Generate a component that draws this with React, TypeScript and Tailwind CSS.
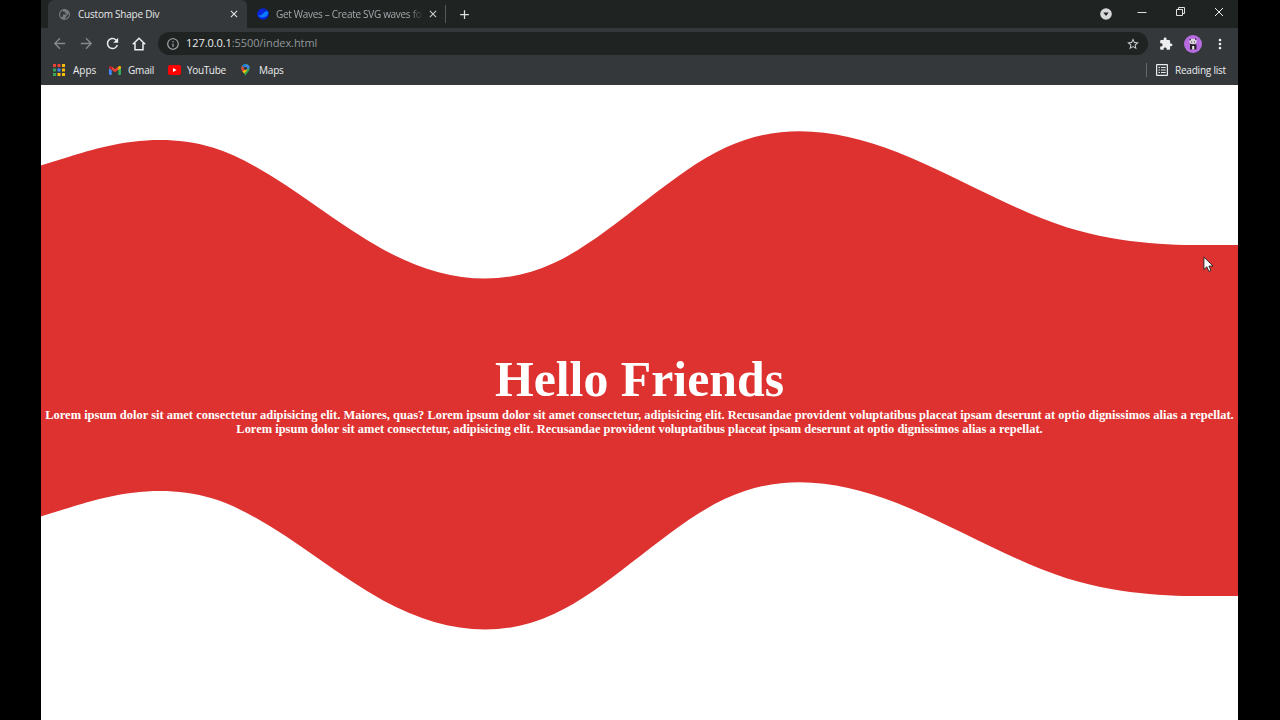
import React from 'react'
import { MdStarOutline, MdExtension, MdMoreVert, MdPublic, MdArrowBack, MdArrowForward, MdRefresh, MdInfoOutline, MdClose, MdAdd } from 'react-icons/md'

const WAVE =
  'M0,96L34.3,85.3C68.6,74.7,137,53.3,206,74.7C274.3,96,343,160,411,197.3C480,234.7,549,245.3,617,213.3C685.7,181.3,754,106.7,823,74.7C891.4,42.7,960,53.3,1029,80C1097.1,106.7,1166,149.3,1234,170.7C1302.9,192,1371,192,1406,192L1440,192'

const APP_COLORS = [
  '#ea4335', '#ea4335', '#fbbc04',
  '#34a853', '#4285f4', '#fbbc04',
  '#34a853', '#fbbc04', '#fbbc04',
]

function AppsIcon() {
  return (
    <svg viewBox="0 0 12 12" className="w-3 h-3">
      {APP_COLORS.map((color, i) => (
        <rect key={i} x={(i % 3) * 4.5} y={Math.floor(i / 3) * 4.5} width="3" height="3" fill={color} />
      ))}
    </svg>
  )
}

function GmailIcon() {
  return (
    <svg viewBox="0 0 24 18" className="w-3 h-[9px]">
      <path fill="#4285f4" d="M0 3v13.4C0 17.3.7 18 1.6 18h3.9V7.6z" />
      <path fill="#34a853" d="M18.5 18h3.9c.9 0 1.6-.7 1.6-1.6V3l-5.5 4.6z" />
      <path fill="#ea4335" d="M5.5 7.6V1.2L12 6.2l6.5-5v6.4L12 12.7z" />
      <path fill="#c5221f" d="M0 3v1.4l5.5 4.1V1.2L4 .5C2.2-.7 0 .6 0 3z" />
      <path fill="#fbbc04" d="M18.5 1.2v7.3L24 4.4V3c0-2.4-2.2-3.7-4-2.5z" />
    </svg>
  )
}

function YouTubeIcon() {
  return (
    <svg viewBox="0 0 13 10" className="w-[13px] h-2.5">
      <rect width="13" height="10" rx="2" fill="#f00" />
      <path d="M5 3v4l3.6-2z" fill="#fff" />
    </svg>
  )
}

function MapsIcon() {
  return (
    <svg viewBox="0 0 20 28" className="w-[9px] h-3">
      <defs>
        <clipPath id="pin">
          <path d="M10 0C4.5 0 0 4.5 0 10c0 7 7.5 10 10 18 2.5-8 10-11 10-18C20 4.5 15.5 0 10 0z" />
        </clipPath>
      </defs>
      <g clipPath="url(#pin)">
        <path fill="#34a853" d="M0 0h20v28H0z" />
        <path fill="#fbbc04" d="M0 19L10 8l5 4L4 26z" />
        <path fill="#ea4335" d="M0 3l10 8-8 8-4-6z" />
        <path fill="#1a73e8" d="M2 4L7-1h5l-6 9z" />
        <path fill="#4285f4" d="M7 8l7-9 7 9-7 5z" />
      </g>
      <circle cx="10" cy="10" r="3.8" fill="#35383b" />
    </svg>
  )
}

function WavesIcon() {
  return (
    <svg viewBox="0 0 12 12" className="w-3 h-3">
      <circle cx="6" cy="6" r="5.8" fill="#0a24d8" />
      <path d="M.6 6.8C2 8 3.5 7.6 5 6.4c2-1.6 3-3.4 5-3.2.4 0 .9.4 1.3.8A5.8 5.8 0 0 1 .6 6.8z" fill="#0a7dff" />
    </svg>
  )
}

function HomeIcon() {
  return (
    <svg viewBox="0 0 14 14" className="w-3.5 h-3.5" fill="none" stroke="#eceeef" strokeWidth="1.5">
      <path d="M.8 7.3L7 1.3l6.2 6M3 6v6.7h8V6" />
    </svg>
  )
}

function ReadingListIcon() {
  return (
    <svg viewBox="0 0 12 12" className="w-3 h-3" fill="none" stroke="#e8eaed" strokeWidth="1.2">
      <rect x=".6" y=".6" width="10.8" height="10.8" rx=".4" />
      <path d="M2.5 3.5H4M5 3.5h4.7M2.5 6H4M5 6h4.7M2.5 8.5H4M5 8.5h4.7" />
    </svg>
  )
}

function Avatar() {
  return (
    <svg viewBox="0 0 18 18" className="w-[18px] h-[18px]">
      <circle cx="9" cy="9" r="9" fill="#b76be0" />
      <path d="M6 8.5l6.5 1v5H6z" fill="#29222d" />
      <ellipse cx="9" cy="6.5" rx="3.6" ry="2.7" fill="#ddd6dc" />
      <path d="M5.5 4h1.3v1.3H5.5zM11 3.5h1.3v1.3H11zM7.2 6.5h1v1h-1zM10 6.5h1v1h-1z" fill="#29222d" />
      <path d="M8.2 11h2v3.5h-2z" fill="#eee" />
    </svg>
  )
}

const BOOKMARKS = [
  { label: 'Apps', icon: <AppsIcon />, box: 'w-[43px] mr-[13px]', text: 'w-[23px]' },
  { label: 'Gmail', icon: <GmailIcon />, box: 'w-[46px] mr-[13px]', text: 'w-[27px] tracking-[-0.2px]' },
  { label: 'YouTube', icon: <YouTubeIcon />, box: 'w-[58px] mr-[15px]', text: 'w-[39px] tracking-[-0.35px]' },
  { label: 'Maps', icon: <MapsIcon />, box: 'w-[43px]', text: 'w-[25px] tracking-[-0.2px]' },
]

function TabStrip() {
  return (
    <div className="flex h-7 bg-[#1f2322] pl-[7px] text-[10px]">
      <div className="flex items-center w-[199px] h-7 rounded-t-md bg-[#35383b] pl-2.5 pr-[7px]">
        <MdPublic className="w-[13px] h-[13px] -scale-x-100 text-[#777b7e]" />
        <span className="ml-[7px] whitespace-nowrap tracking-[-0.22px] text-[#e4e6e8]">Custom Shape Div</span>
        <MdClose className="ml-auto w-3 h-3 text-[#e8eaed]" />
      </div>
      <div className="flex items-center w-[199px] pl-2.5 pr-1.5 border-r border-[#55595b] h-[18px] mt-[5px]">
        <WavesIcon />
        <span className="ml-[7px] w-[148px] shrink-0 whitespace-nowrap tracking-[-0.3px] text-[#a4a9ac] [mask-image:linear-gradient(to_right,black_132px,transparent_148px)]">
          Get Waves – Create SVG waves fo
        </span>
        <MdClose className="ml-auto w-3 h-3 shrink-0 text-[#d0d3d5]" />
      </div>
      <MdAdd className="ml-[11px] mt-[7px] w-[15px] h-[15px] text-[#dfe1e3]" />
      <div className="ml-auto flex items-start">
        <svg viewBox="0 0 12 12" className="mt-2 mr-[25px] w-3 h-3">
          <circle cx="6" cy="6" r="5.8" fill="#d6d8d9" />
          <path d="M3.3 4.5h5.4L6 8z" fill="#1f2322" />
        </svg>
        <svg viewBox="0 0 10 10" className="mt-[7px] mr-[29px] w-2.5 h-2.5" stroke="#e0e0e0">
          <path d="M.5 5.5h9" />
        </svg>
        <svg viewBox="0 0 10 10" className="mt-[7px] mr-7 w-2.5 h-2.5" fill="none" stroke="#e0e0e0">
          <path d="M.5 2.5h6v6h-6zM2.500 2.500v-2h6v6h-2" />
        </svg>
        <svg viewBox="0 0 10 10" className="mt-[7px] mr-[14px] w-2.5 h-2.5" stroke="#f0f0f0">
          <path d="M1 1l8 8M9 1L1 9" />
        </svg>
      </div>
    </div>
  )
}

function Toolbar() {
  return (
    <div className="flex items-center h-[31px] bg-[#35383b]">
      <MdArrowBack className="ml-2.5 w-[17px] h-[17px] text-[#85898c]" />
      <MdArrowForward className="ml-2.5 w-[17px] h-[17px] text-[#85898c]" />
      <MdRefresh className="ml-[9px] w-[17px] h-[17px] text-[#eceeef]" />
      <div className="ml-[11px] mr-3"><HomeIcon /></div>
      <div className="flex items-center flex-1 h-[23px] rounded-full bg-[#1f2322] pl-2 pr-2 text-[11px]">
        <MdInfoOutline className="w-[14px] h-[14px] text-[#a4a8ab]" />
        <span className="ml-1.5 whitespace-nowrap tracking-[-0.08px] text-[#92979a]">
          <span className="text-[#eceeef]">127.0.0.1</span>:5500/index.html
        </span>
        <MdStarOutline className="ml-auto w-[14px] h-[14px] text-[#d0d3d5]" />
      </div>
      <MdExtension className="ml-[11px] w-[14px] h-[14px] text-[#eceeef]" />
      <div className="ml-[11px]"><Avatar /></div>
      <MdMoreVert className="ml-2.5 mr-2.5 w-4 h-4 text-[#eceeef]" />
    </div>
  )
}

function BookmarksBar() {
  return (
    <div className="flex items-center h-[26px] bg-[#35383b] pl-3 pb-1 text-[10px] text-[#eceeef]">
      {BOOKMARKS.map((item) => (
        <div key={item.label} className={`flex items-center justify-between ${item.box}`}>
          {item.icon}
          <span className={`whitespace-nowrap ${item.text}`}>{item.label}</span>
        </div>
      ))}
      <div className="ml-auto mr-3 flex items-center h-3.5 border-l border-[#64686b] pl-[9px]">
        <ReadingListIcon />
        <span className="ml-[7px] w-[51px] whitespace-nowrap tracking-[-0.22px]">Reading list</span>
      </div>
    </div>
  )
}

export default function App() {
  return (
    <div className="h-[720px] overflow-hidden bg-black pl-[41px] pr-[42px]">
      <div className="relative h-full overflow-hidden bg-white">
        <header className="font-['Open_Sans',sans-serif]">
          <TabStrip />
          <Toolbar />
          <BookmarksBar />
        </header>

        <main className="font-['Liberation_Serif',serif]">
          <svg viewBox="-0.6 -0.6 1440 320" className="block w-full h-[266px]" preserveAspectRatio="none">
            <path fill="#dd3230" d={`${WAVE}V322H-1V96.3Z`} />
          </svg>
          <section className="h-[85px] bg-[#dd3230] text-center font-bold text-white">
            <h1 className="text-[49.8px] leading-[57px]">Hello Friends</h1>
            <p className="text-[12.47px] leading-[14px] whitespace-nowrap">
              Lorem ipsum dolor sit amet consectetur adipisicing elit. Maiores, quas? Lorem ipsum dolor sit amet consectetur, adipisicing elit. Recusandae provident voluptatibus placeat ipsam deserunt at optio dignissimos alias a repellat.
              <br />
              Lorem ipsum dolor sit amet consectetur, adipisicing elit. Recusandae provident voluptatibus placeat ipsam deserunt at optio dignissimos alias a repellat.
            </p>
          </section>
          <svg viewBox="-0.6 -0.6 1440 320" className="block w-full h-[266px]" preserveAspectRatio="none">
            <path fill="#dd3230" d={`${WAVE}V-2H-1V96.3Z`} />
          </svg>
        </main>

        {/* Mouse pointer */}
        <svg viewBox="0 0 12 18" className="absolute left-[1162px] top-[256px] w-[11px] h-[17px]">
          <path d="M1 1v13.5l3.2-3 2.2 5 2.3-1-2.2-4.8H11z" fill="#fff" stroke="#222" />
        </svg>
      </div>
    </div>
  )
}
